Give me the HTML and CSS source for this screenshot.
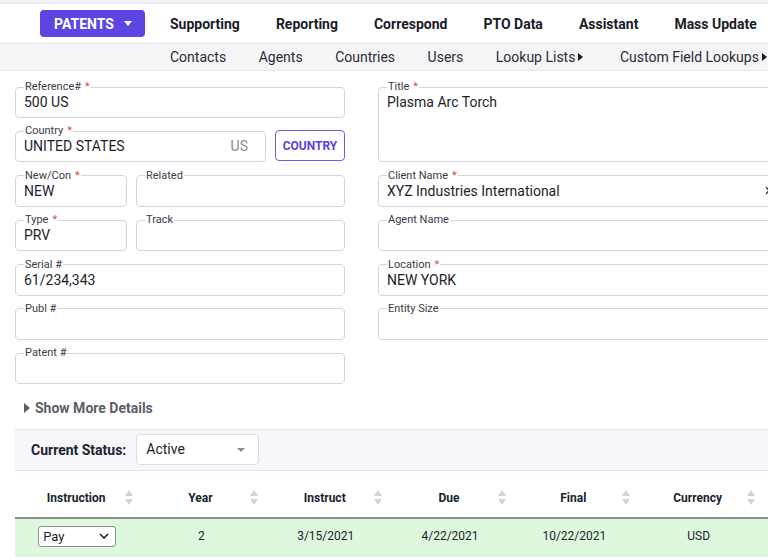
FILE: index.html
```html
<!DOCTYPE html>
<html lang="en">
<head>
<meta charset="utf-8">
<title>Patents</title>
<link rel="stylesheet" href="styles.css">
</head>
<body>
<div class="topline"></div>
<nav class="mainnav">
  <button class="btn-patents">PATENTS<span class="caret-white"></span></button>
  <a class="nav-item first">Supporting</a>
  <a class="nav-item">Reporting</a>
  <a class="nav-item">Correspond</a>
  <a class="nav-item">PTO Data</a>
  <a class="nav-item">Assistant</a>
  <a class="nav-item">Mass Update</a>
</nav>
<div class="subnav">
  <a class="sub-item">Contacts</a>
  <a class="sub-item">Agents</a>
  <a class="sub-item">Countries</a>
  <a class="sub-item">Users</a>
  <a class="sub-item">Lookup Lists<span class="tri-right"></span></a>
  <a class="sub-item last">Custom Field Lookups<span class="tri-right"></span></a>
</div>

<main class="form">
  <div class="left r1 row">
    <fieldset class="field grow"><legend>Reference#<span class="req">*</span></legend><div class="val">500 US</div></fieldset>
  </div>
  <div class="left r2 row">
    <fieldset class="field grow"><legend>Country<span class="req">*</span></legend><div class="val split"><span>UNITED STATES</span><span class="code">US</span></div></fieldset>
    <button class="btn-country">COUNTRY</button>
  </div>
  <div class="left r3 row">
    <fieldset class="field small"><legend>New/Con<span class="req">*</span></legend><div class="val">NEW</div></fieldset>
    <fieldset class="field grow"><legend>Related</legend><div class="val"></div></fieldset>
  </div>
  <div class="left r4 row">
    <fieldset class="field small"><legend>Type<span class="req">*</span></legend><div class="val">PRV</div></fieldset>
    <fieldset class="field grow"><legend>Track</legend><div class="val"></div></fieldset>
  </div>
  <div class="left r5 row">
    <fieldset class="field grow"><legend>Serial #</legend><div class="val">61/234,343</div></fieldset>
  </div>
  <div class="left r6 row">
    <fieldset class="field grow"><legend>Publ #</legend><div class="val"></div></fieldset>
  </div>
  <div class="left r7 row">
    <fieldset class="field grow"><legend>Patent #</legend><div class="val"></div></fieldset>
  </div>

  <fieldset class="field right r1 title"><legend>Title<span class="req">*</span></legend><div class="val">Plasma Arc Torch</div></fieldset>
  <fieldset class="field right r3"><legend>Client Name<span class="req">*</span></legend><div class="val split"><span>XYZ Industries International</span><svg class="clear" width="8" height="9" viewBox="0 0 8 9"><path d="M1 1 L7 8 M7 1 L1 8" stroke="#333" stroke-width="1.3" fill="none"/></svg></div></fieldset>
  <fieldset class="field right r4"><legend>Agent Name</legend><div class="val"></div></fieldset>
  <fieldset class="field right r5"><legend>Location<span class="req">*</span></legend><div class="val">NEW YORK</div></fieldset>
  <fieldset class="field right r6"><legend>Entity Size</legend><div class="val"></div></fieldset>
</main>

<div class="show-more"><span class="tri-gray"></span>Show More Details</div>

<section class="status-bar">
  <span class="status-label">Current Status:</span>
  <div class="status-select"><span>Active</span><span class="caret-gray"></span></div>
</section>

<table class="grid-table">
  <colgroup>
    <col class="c"><col class="c"><col class="c"><col class="c"><col class="c"><col class="c"><col>
  </colgroup>
  <thead>
    <tr>
      <th><div class="th-in"><span class="sp"></span><span class="th-label">Instruction</span><svg class="sort" width="8" height="17" viewBox="0 0 8 17"><path d="M0 7 L4 1 L8 7 Z M0 10 L4 16 L8 10 Z" fill="#d3d3d8"/></svg></div></th>
      <th><div class="th-in"><span class="sp"></span><span class="th-label">Year</span><svg class="sort" width="8" height="17" viewBox="0 0 8 17"><path d="M0 7 L4 1 L8 7 Z M0 10 L4 16 L8 10 Z" fill="#d3d3d8"/></svg></div></th>
      <th><div class="th-in"><span class="sp"></span><span class="th-label">Instruct</span><svg class="sort" width="8" height="17" viewBox="0 0 8 17"><path d="M0 7 L4 1 L8 7 Z M0 10 L4 16 L8 10 Z" fill="#d3d3d8"/></svg></div></th>
      <th><div class="th-in"><span class="sp"></span><span class="th-label">Due</span><svg class="sort" width="8" height="17" viewBox="0 0 8 17"><path d="M0 7 L4 1 L8 7 Z M0 10 L4 16 L8 10 Z" fill="#d3d3d8"/></svg></div></th>
      <th><div class="th-in"><span class="sp"></span><span class="th-label">Final</span><svg class="sort" width="8" height="17" viewBox="0 0 8 17"><path d="M0 7 L4 1 L8 7 Z M0 10 L4 16 L8 10 Z" fill="#d3d3d8"/></svg></div></th>
      <th><div class="th-in"><span class="sp"></span><span class="th-label">Currency</span><svg class="sort" width="8" height="17" viewBox="0 0 8 17"><path d="M0 7 L4 1 L8 7 Z M0 10 L4 16 L8 10 Z" fill="#d3d3d8"/></svg></div></th>
      <th></th>
    </tr>
  </thead>
  <tbody>
    <tr class="row-green">
      <td><div class="pay-select"><span>Pay</span><svg width="10" height="6" viewBox="0 0 10 6"><polyline points="1,1 5,5 9,1" fill="none" stroke="#222" stroke-width="1.6"/></svg></div></td>
      <td>2</td>
      <td>3/15/2021</td>
      <td>4/22/2021</td>
      <td>10/22/2021</td>
      <td>USD</td>
      <td></td>
    </tr>
  </tbody>
</table>
</body>
</html>
```

FILE: styles.css
```css
html, body {
  margin: 0;
  padding: 0;
  width: 768px;
  height: 560px;
  overflow: hidden;
  background: #ffffff;
  font-family: Roboto, "Liberation Sans", Arial, sans-serif;
  color: #1c1c2a;
}

.topline {
  height: 3px;
  background: #f1f2f4;
  border-bottom: 1px solid #e9eaed;
}

.mainnav {
  height: 39px;
  display: flex;
  align-items: center;
  padding-left: 40px;
  background: #fff;
}

.mainnav > * { flex-shrink: 0; }

.btn-patents {
  width: 105px;
  height: 27px;
  border: none;
  border-radius: 4px;
  background: #5b46e4;
  color: #fff;
  font-family: inherit;
  font-weight: 700;
  font-size: 14px;
  display: flex;
  align-items: center;
  padding: 0 0 0 14px;
  box-sizing: border-box;
}

.caret-white {
  display: inline-block;
  width: 0;
  height: 0;
  margin-left: 10px;
  border-top: 5px solid #fff;
  border-left: 4.5px solid transparent;
  border-right: 4.5px solid transparent;
}

.nav-item {
  font-weight: 700;
  font-size: 14px;
  color: #1b1b28;
  padding: 0 18px;
  white-space: nowrap;
}
.nav-item.first { margin-left: 7px; }

.subnav {
  height: 26px;
  display: flex;
  align-items: center;
  gap: 32.5px;
  padding-left: 170px;
  background: #f5f5f7;
  border-top: 1px solid #e4e5ea;
  border-bottom: 1px solid #e4e6ec;
  white-space: nowrap;
}

.sub-item {
  flex-shrink: 0;
  font-size: 14px;
  color: #2a2a36;
  display: inline-flex;
  align-items: center;
}

.sub-item.last { margin-left: 4px; }

.tri-right {
  display: inline-block;
  width: 0;
  height: 0;
  margin-left: 3px;
  border-left: 5px solid #1e1e1e;
  border-top: 4.5px solid transparent;
  border-bottom: 4.5px solid transparent;
}

/* form */
.form {
  display: grid;
  grid-template-columns: 330px 412px;
  grid-template-rows: repeat(7, 37px);
  column-gap: 33px;
  row-gap: 7.4px;
  padding: 10px 0 0 15px;
}

.left { grid-column: 1; }
.right { grid-column: 2; }
.r1 { grid-row: 1; }
.r2 { grid-row: 2; }
.r3 { grid-row: 3; }
.r4 { grid-row: 4; }
.r5 { grid-row: 5; }
.r6 { grid-row: 6; }
.r7 { grid-row: 7; }
.title { grid-row: 1 / span 2; }

.row {
  display: flex;
  gap: 9px;
}

.field {
  margin: 0;
  padding: 1px 8px 7px;
  border: 1px solid #d5d6db;
  border-radius: 4px;
  min-width: 0;
  box-sizing: border-box;
  background: #fff;
}

.field legend {
  font-size: 11px;
  line-height: 12px;
  padding: 0 1px;
  color: #3a3a48;
}

.req {
  color: #e5453a;
  margin-left: 4px;
}

.grow { flex: 1; }
.small { width: 112px; flex: none; }

.val {
  height: 16px;
  line-height: 16px;
  font-size: 14px;
  color: #1d1d2b;
  white-space: nowrap;
}

.split {
  display: flex;
  justify-content: space-between;
  align-items: center;
}

.code {
  color: #8b8b92;
  margin-right: 9px;
}

.clear { margin-right: 8px; }

.btn-country {
  align-self: flex-end;
  flex-shrink: 0;
  width: 70px;
  height: 31px;
  margin-bottom: 1px;
  border: 1.5px solid #6b5be6;
  border-radius: 4px;
  background: #fff;
  color: #5643de;
  font-family: inherit;
  font-weight: 700;
  font-size: 12px;
  padding: 0;
}

/* show more */
.show-more {
  margin-top: 13.6px;
  padding-left: 24px;
  height: 20px;
  display: flex;
  align-items: center;
  font-size: 14px;
  font-weight: 700;
  color: #5d5d68;
}

.tri-gray {
  display: inline-block;
  width: 0;
  height: 0;
  margin-right: 5px;
  border-left: 6px solid #5d5d66;
  border-top: 5px solid transparent;
  border-bottom: 5px solid transparent;
}

/* status bar */
.status-bar {
  margin: 11px 0 0 15px;
  height: 40px;
  display: flex;
  align-items: center;
  padding-left: 16px;
  background: #f6f6fb;
  border-top: 1px solid #e6e6ee;
  border-bottom: 1px solid #dde3ee;
  box-sizing: content-box;
}

.status-label {
  font-size: 14px;
  font-weight: 700;
  color: #1f2033;
}

.status-select {
  margin-left: 10px;
  width: 123px;
  height: 31px;
  box-sizing: border-box;
  background: #fff;
  border: 1px solid #dcdce2;
  border-radius: 4px;
  display: flex;
  align-items: center;
  justify-content: space-between;
  padding: 0 13px 0 9px;
  font-size: 14px;
  color: #1d1d2b;
}

.status-select span:first-child { margin-top: -2px; }

.caret-gray {
  display: inline-block;
  width: 0;
  height: 0;
  border-top: 4.5px solid #8a8a90;
  border-left: 4.5px solid transparent;
  border-right: 4.5px solid transparent;
}

/* table */
.grid-table {
  margin-left: 15px;
  width: 800px;
  border-collapse: collapse;
  table-layout: fixed;
}

.grid-table col.c { width: 124.3px; }

.grid-table th {
  padding: 19px 4px 11px;
  font-size: 12px;
  font-weight: 700;
  color: #20212f;
  border-bottom: 2px solid #8c8c8e;
  text-align: center;
}

.th-in {
  display: flex;
  align-items: center;
  height: 16px;
}

.sp { width: 8px; flex: none; }
.th-label { flex: 1; text-align: center; }
.sort { flex: none; margin-right: 2px; }

.row-green td {
  background: #def8dd;
  padding: 7px 0 10px;
  font-size: 12px;
  color: #22222e;
  text-align: center;
  height: 21px;
}

.pay-select {
  margin: 0 auto;
  width: 78px;
  height: 21px;
  box-sizing: border-box;
  border: 1px solid #8d8d92;
  border-radius: 3px;
  background: #fff;
  display: flex;
  align-items: center;
  justify-content: space-between;
  padding: 0 6px 0 4px;
  font-size: 13px;
  color: #1d1d2b;
}
```
